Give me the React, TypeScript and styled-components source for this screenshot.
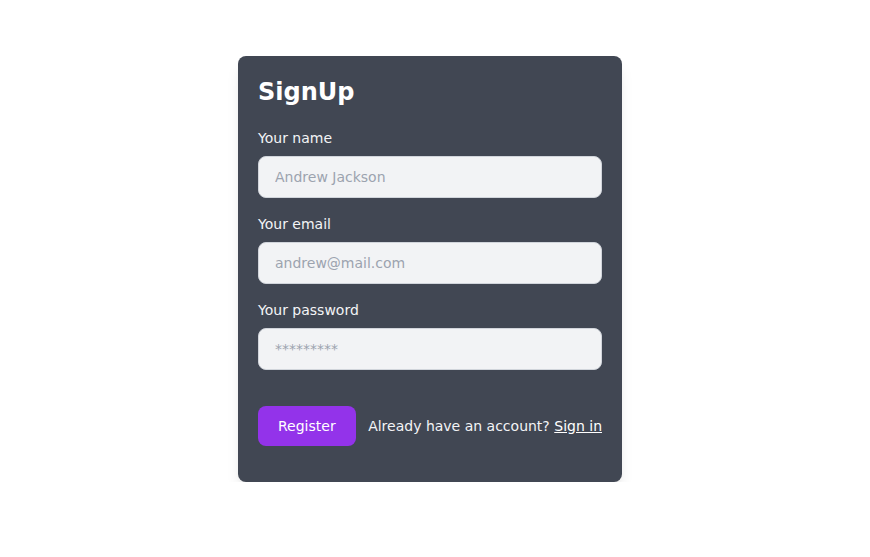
import styled, { createGlobalStyle } from "styled-components";

const GlobalStyle = createGlobalStyle`
  body {
    margin: 0;
    background: #ffffff;
    font-family: "DejaVu Sans", "Noto Sans", sans-serif;
  }
  * { box-sizing: border-box; }
`;

const Page = styled.div`
  display: flex;
  justify-content: center;
  padding: 56px 10px 0 0;
`;

const Card = styled.form`
  width: 384px;
  background: #414753;
  border-radius: 8px;
  padding: 20px 20px 36px;
  box-shadow: 0 10px 15px -3px rgba(0, 0, 0, 0.1), 0 4px 6px -4px rgba(0, 0, 0, 0.1);
  display: flex;
  flex-direction: column;
`;

const Title = styled.h1`
  margin: 0 0 20px;
  font-size: 24px;
  line-height: 32px;
  font-weight: 700;
  color: #ffffff;
`;

const Field = styled.div`
  display: flex;
  flex-direction: column;
  margin-bottom: 16px;
`;

const Label = styled.label`
  font-size: 14px;
  line-height: 20px;
  color: #f3f4f6;
  margin-bottom: 8px;
`;

const Input = styled.input`
  height: 42px;
  width: 100%;
  padding: 0 16px;
  font-family: inherit;
  font-size: 14px;
  color: #111827;
  background: #f2f3f5;
  border: 1px solid #d1d5db;
  border-radius: 8px;
  outline: none;

  &::placeholder {
    color: #9ca3af;
  }
`;

const Footer = styled.div`
  display: flex;
  align-items: center;
  justify-content: space-between;
  gap: 12px;
  margin-top: 20px;
`;

const Button = styled.button`
  flex-shrink: 0;
  height: 40px;
  padding: 0 20px;
  border: none;
  border-radius: 8px;
  background: #9333ea;
  color: #ffffff;
  font-family: inherit;
  font-size: 14px;
  cursor: pointer;
`;

const Note = styled.p`
  margin: 0;
  font-size: 14px;
  white-space: nowrap;
  color: #f3f4f6;

  a {
    color: #ffffff;
    text-decoration: underline;
  }
`;

export default function App() {
  return (
    <>
      <GlobalStyle />
      <Page>
        <Card onSubmit={(e) => e.preventDefault()}>
          <Title>SignUp</Title>
          <Field>
            <Label htmlFor="name">Your name</Label>
            <Input id="name" type="text" placeholder="Andrew Jackson" />
          </Field>
          <Field>
            <Label htmlFor="email">Your email</Label>
            <Input id="email" type="email" placeholder="andrew@mail.com" />
          </Field>
          <Field>
            <Label htmlFor="password">Your password</Label>
            <Input id="password" type="password" placeholder="*********" />
          </Field>
          <Footer>
            <Button type="submit">Register</Button>
            <Note>
              Already have an account? <a href="#">Sign in</a>
            </Note>
          </Footer>
        </Card>
      </Page>
    </>
  );
}
